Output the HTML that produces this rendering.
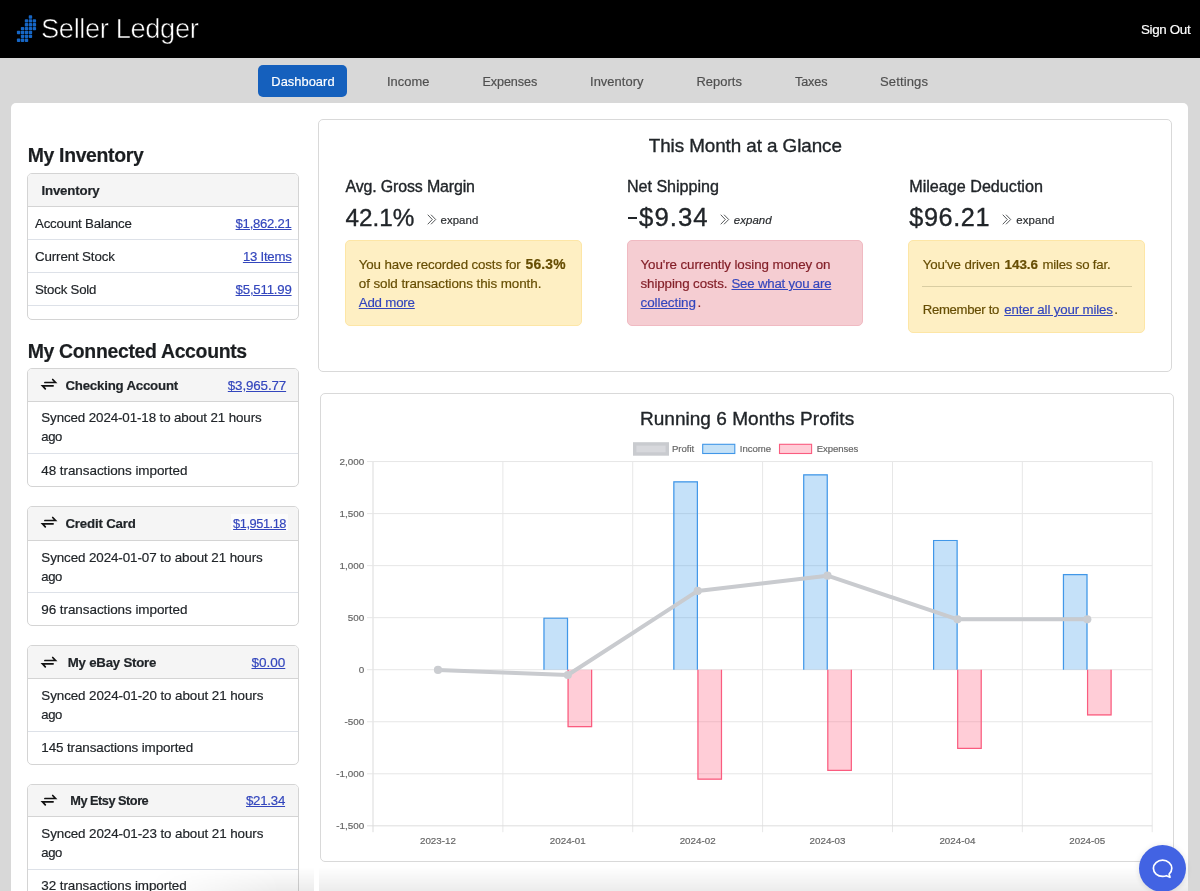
<!DOCTYPE html>
<html><head><meta charset="utf-8"><title>Seller Ledger</title>
<style>
*{box-sizing:border-box;margin:0;padding:0}
html,body{width:1200px;height:891px;overflow:hidden}
body{background:#d8d8d8;font-family:"Liberation Sans",sans-serif;position:relative;color:#212529}
.t{position:absolute;white-space:nowrap;display:block;-webkit-text-stroke:0.18px currentColor}

.card{position:absolute;border:1px solid #d4d4d4;border-radius:5px;background:#fff;overflow:hidden}
.hd{position:absolute;left:0;right:0;top:0;background:#f5f5f5;border-bottom:1px solid #d4d4d4}
.ln{position:absolute;left:0;right:0;height:1px;background:#dde1e8}

#root{position:absolute;left:0;top:0;width:1200px;height:891px;overflow:hidden;will-change:transform}
</style></head><body><div id="root">
<div class="" style="position:absolute;left:0px;top:0px;width:1200.00px;height:58.00px;background:#000"></div>
<svg style="position:absolute;left:0;top:0" width="60" height="58" viewBox="0 0 60 58"><rect x="28.75" y="15.30" width="3.4" height="3.4" rx="0.8" fill="#1666c5"/><rect x="24.80" y="19.18" width="3.4" height="3.4" rx="0.8" fill="#1666c5"/><rect x="28.75" y="19.18" width="3.4" height="3.4" rx="0.8" fill="#1666c5"/><rect x="32.70" y="19.18" width="3.4" height="3.4" rx="0.8" fill="#1666c5"/><rect x="24.80" y="23.06" width="3.4" height="3.4" rx="0.8" fill="#1666c5"/><rect x="28.75" y="23.06" width="3.4" height="3.4" rx="0.8" fill="#1666c5"/><rect x="32.70" y="23.06" width="3.4" height="3.4" rx="0.8" fill="#1666c5"/><rect x="20.85" y="26.94" width="3.4" height="3.4" rx="0.8" fill="#1666c5"/><rect x="24.80" y="26.94" width="3.4" height="3.4" rx="0.8" fill="#1666c5"/><rect x="28.75" y="26.94" width="3.4" height="3.4" rx="0.8" fill="#1666c5"/><rect x="32.70" y="26.94" width="3.4" height="3.4" rx="0.8" fill="#1666c5"/><rect x="16.90" y="30.82" width="3.4" height="3.4" rx="0.8" fill="#1666c5"/><rect x="20.85" y="30.82" width="3.4" height="3.4" rx="0.8" fill="#1666c5"/><rect x="24.80" y="30.82" width="3.4" height="3.4" rx="0.8" fill="#1666c5"/><rect x="28.75" y="30.82" width="3.4" height="3.4" rx="0.8" fill="#1666c5"/><rect x="20.85" y="34.70" width="3.4" height="3.4" rx="0.8" fill="#1666c5"/><rect x="24.80" y="34.70" width="3.4" height="3.4" rx="0.8" fill="#1666c5"/><rect x="28.75" y="34.70" width="3.4" height="3.4" rx="0.8" fill="#1666c5"/><rect x="16.90" y="38.58" width="3.4" height="3.4" rx="0.8" fill="#1666c5"/><rect x="20.85" y="38.58" width="3.4" height="3.4" rx="0.8" fill="#1666c5"/><rect x="24.80" y="38.58" width="3.4" height="3.4" rx="0.8" fill="#1666c5"/></svg>
<span class="t" style="left:41.00px;top:11.01px;font-size:27.3px;line-height:35px;letter-spacing:-0.381px;color:#fff;-webkit-text-stroke:0.6px #000;">Seller Ledger</span>
<span class="t" style="left:1141.00px;top:21.00px;font-size:13.38px;line-height:17px;letter-spacing:-0.340px;color:#fff;">Sign Out</span>
<div class="" style="position:absolute;left:258px;top:65px;width:89.00px;height:32.00px;background:#1560bd;border-radius:5px"></div>
<span class="t" style="left:271.30px;top:73.01px;font-size:12.87px;line-height:17px;letter-spacing:0.042px;color:#fff;">Dashboard</span>
<span class="t" style="left:387.00px;top:73.01px;font-size:12.86px;line-height:17px;letter-spacing:0.044px;color:#4f4f4f;">Income</span>
<span class="t" style="left:482.50px;top:74.01px;font-size:12.64px;line-height:16px;letter-spacing:-0.103px;color:#4f4f4f;">Expenses</span>
<span class="t" style="left:590.00px;top:73.01px;font-size:12.9px;line-height:17px;letter-spacing:0.056px;color:#4f4f4f;">Inventory</span>
<span class="t" style="left:696.50px;top:73.01px;font-size:12.9px;line-height:17px;letter-spacing:0.053px;color:#4f4f4f;">Reports</span>
<span class="t" style="left:795.00px;top:74.00px;font-size:12.62px;line-height:16px;letter-spacing:-0.117px;color:#4f4f4f;">Taxes</span>
<span class="t" style="left:880.00px;top:73.01px;font-size:13.04px;line-height:17px;letter-spacing:0.128px;color:#4f4f4f;">Settings</span>
<div class="" style="position:absolute;left:11px;top:103px;width:1177.00px;height:797.00px;background:#fff;border-radius:5px 5px 0 0"></div>
<span class="t" style="left:27.75px;top:143.01px;font-size:19.4px;line-height:25px;letter-spacing:-0.332px;color:#1b1e21;font-weight:700;">My Inventory</span>
<div class="card" style="position:absolute;left:27px;top:173px;width:272.00px;height:147.00px;"><div class="hd" style="height:33px"></div><div class="ln" style="top:65px"></div><div class="ln" style="top:98px"></div><div class="ln" style="top:131px"></div></div>
<span class="t" style="left:41.50px;top:182.01px;font-size:13.27px;line-height:17px;letter-spacing:-0.183px;color:#212529;font-weight:700;">Inventory</span>
<span class="t" style="left:35.00px;top:215.01px;font-size:13.26px;line-height:17px;letter-spacing:-0.187px;color:#212529;">Account Balance</span>
<span class="t" style="left:35.00px;top:248.01px;font-size:13.34px;line-height:17px;letter-spacing:-0.131px;color:#212529;">Current Stock</span>
<span class="t" style="left:35.00px;top:281.01px;font-size:13.22px;line-height:17px;letter-spacing:-0.199px;color:#212529;">Stock Sold</span>
<span class="t" style="left:235.60px;top:215.00px;font-size:13.11px;line-height:17px;letter-spacing:-0.267px;color:#3346bd;text-decoration:underline;">$1,862.21</span>
<span class="t" style="left:242.90px;top:248.01px;font-size:13.18px;line-height:17px;letter-spacing:-0.235px;color:#3346bd;text-decoration:underline;">13 Items</span>
<span class="t" style="left:235.60px;top:281.01px;font-size:13.22px;line-height:17px;letter-spacing:-0.205px;color:#3346bd;text-decoration:underline;">$5,511.99</span>
<span class="t" style="left:27.70px;top:339.01px;font-size:19.44px;line-height:25px;letter-spacing:-0.329px;color:#1b1e21;font-weight:700;">My Connected Accounts</span>
<div class="card" style="position:absolute;left:27px;top:368px;width:272.00px;height:119.00px;"><div class="hd" style="height:33px"></div><div class="ln" style="top:84px"></div></div>
<svg style="position:absolute;left:36px;top:372.0px" width="28" height="24" viewBox="36 372 28 24"><g fill="none" stroke="#111" stroke-width="1.7" stroke-linecap="round" stroke-linejoin="miter"><path d="M44.9 382.5H55.5L52.7 379.5"/><path d="M53.1 385.8H42.5L45.3 388.8"/></g></svg>
<span class="t" style="left:65.40px;top:377.01px;font-size:13.26px;line-height:17px;letter-spacing:-0.202px;color:#212529;font-weight:700;">Checking Account</span>
<span class="t" style="left:227.80px;top:377.00px;font-size:13.37px;line-height:17px;letter-spacing:-0.125px;color:#3346bd;text-decoration:underline;">$3,965.77</span>
<span class="t" style="left:41.30px;top:409.01px;font-size:13.36px;line-height:17px;letter-spacing:-0.115px;color:#212529;">Synced 2024-01-18 to about 21 hours</span>
<span class="t" style="left:41.30px;top:428.01px;font-size:13.1px;line-height:17px;letter-spacing:-0.422px;color:#212529;">ago</span>
<span class="t" style="left:41.30px;top:462.01px;font-size:13.48px;line-height:18px;letter-spacing:-0.061px;color:#212529;">48 transactions imported</span>
<div class="card" style="position:absolute;left:27px;top:506px;width:272.00px;height:120.00px;"><div class="hd" style="height:34px"></div><div class="ln" style="top:85px"></div></div>
<svg style="position:absolute;left:36px;top:510.29999999999995px" width="28" height="24" viewBox="36 372 28 24"><g fill="none" stroke="#111" stroke-width="1.7" stroke-linecap="round" stroke-linejoin="miter"><path d="M44.9 382.5H55.5L52.7 379.5"/><path d="M53.1 385.8H42.5L45.3 388.8"/></g></svg>
<div class="" style="position:absolute;left:231px;top:514px;width:57.00px;height:17.00px;background:#fbfbfb"></div>
<span class="t" style="left:65.40px;top:515.00px;font-size:13.28px;line-height:17px;letter-spacing:-0.171px;color:#212529;font-weight:700;">Credit Card</span>
<span class="t" style="left:233.10px;top:515.01px;font-size:12.8px;line-height:17px;letter-spacing:-0.445px;color:#3346bd;text-decoration:underline;">$1,951.18</span>
<span class="t" style="left:41.30px;top:549.01px;font-size:13.4px;line-height:17px;letter-spacing:-0.100px;color:#212529;">Synced 2024-01-07 to about 21 hours</span>
<span class="t" style="left:41.30px;top:568.01px;font-size:13.1px;line-height:17px;letter-spacing:-0.422px;color:#212529;">ago</span>
<span class="t" style="left:41.30px;top:601.01px;font-size:13.48px;line-height:18px;letter-spacing:-0.061px;color:#212529;">96 transactions imported</span>
<div class="card" style="position:absolute;left:27px;top:645px;width:272.00px;height:120.00px;"><div class="hd" style="height:33px"></div><div class="ln" style="top:85px"></div></div>
<svg style="position:absolute;left:36px;top:649.4999999999999px" width="28" height="24" viewBox="36 372 28 24"><g fill="none" stroke="#111" stroke-width="1.7" stroke-linecap="round" stroke-linejoin="miter"><path d="M44.9 382.5H55.5L52.7 379.5"/><path d="M53.1 385.8H42.5L45.3 388.8"/></g></svg>
<span class="t" style="left:67.80px;top:654.00px;font-size:13.23px;line-height:17px;letter-spacing:-0.207px;color:#212529;font-weight:700;">My eBay Store</span>
<span class="t" style="left:251.50px;top:654.01px;font-size:13.55px;line-height:18px;letter-spacing:-0.027px;color:#3346bd;text-decoration:underline;">$0.00</span>
<span class="t" style="left:41.30px;top:687.00px;font-size:13.42px;line-height:17px;letter-spacing:-0.089px;color:#212529;">Synced 2024-01-20 to about 21 hours</span>
<span class="t" style="left:41.30px;top:706.01px;font-size:13.1px;line-height:17px;letter-spacing:-0.422px;color:#212529;">ago</span>
<span class="t" style="left:41.30px;top:739.01px;font-size:13.4px;line-height:17px;letter-spacing:-0.092px;color:#212529;">145 transactions imported</span>
<div class="card" style="position:absolute;left:27px;top:784px;width:272.00px;height:121.00px;"><div class="hd" style="height:32px"></div><div class="ln" style="top:84px"></div></div>
<svg style="position:absolute;left:36px;top:787.9999999999999px" width="28" height="24" viewBox="36 372 28 24"><g fill="none" stroke="#111" stroke-width="1.7" stroke-linecap="round" stroke-linejoin="miter"><path d="M44.9 382.5H55.5L52.7 379.5"/><path d="M53.1 385.8H42.5L45.3 388.8"/></g></svg>
<span class="t" style="left:70.30px;top:792.01px;font-size:12.78px;line-height:17px;letter-spacing:-0.501px;color:#212529;font-weight:700;">My Etsy Store</span>
<span class="t" style="left:246.00px;top:792.00px;font-size:13.23px;line-height:17px;letter-spacing:-0.230px;color:#3346bd;text-decoration:underline;">$21.34</span>
<span class="t" style="left:41.30px;top:825.00px;font-size:13.42px;line-height:17px;letter-spacing:-0.089px;color:#212529;">Synced 2024-01-23 to about 21 hours</span>
<span class="t" style="left:41.30px;top:844.01px;font-size:13.1px;line-height:17px;letter-spacing:-0.422px;color:#212529;">ago</span>
<span class="t" style="left:41.30px;top:877.01px;font-size:13.44px;line-height:17px;letter-spacing:-0.077px;color:#212529;">32 transactions imported</span>
<div class="card" style="position:absolute;left:318px;top:119px;width:854.00px;height:253.00px;border-color:#d9d9d9"></div>
<span class="t" style="left:648.75px;top:134.00px;font-size:18.84px;line-height:24px;letter-spacing:-0.074px;color:#212529;-webkit-text-stroke:0.35px currentColor;">This Month at a Glance</span>
<span class="t" style="left:345.50px;top:176.01px;font-size:15.94px;line-height:21px;letter-spacing:-0.138px;color:#212529;-webkit-text-stroke:0.35px currentColor;">Avg. Gross Margin</span>
<span class="t" style="left:345.50px;top:202.00px;font-size:24.28px;line-height:32px;letter-spacing:-0.021px;color:#212529;-webkit-text-stroke:0.35px currentColor;">42.1%</span>
<svg style="position:absolute;left:427px;top:214px" width="11" height="12" viewBox="0 0 11 12"><g fill="none" stroke="#3a3d40" stroke-width="0.85" stroke-linecap="round" stroke-linejoin="round"><path d="M1 1L5.3 5.5L1 10"/><path d="M4.3 1L8.7 5.5L4.3 10"/></g></svg>
<span class="t" style="left:440.50px;top:213.00px;font-size:11.4px;line-height:15px;letter-spacing:0.072px;color:#2b2e31;-webkit-text-stroke:0.2px currentColor;">expand</span>
<span class="t" style="left:627.00px;top:176.00px;font-size:16.13px;line-height:21px;letter-spacing:-0.035px;color:#212529;-webkit-text-stroke:0.35px currentColor;">Net Shipping</span>
<div class="" style="position:absolute;left:628px;top:217px;width:9.00px;height:2.40px;background:#212529"></div>
<span class="t" style="left:639.10px;top:201.02px;font-size:25.76px;line-height:33px;letter-spacing:1.009px;color:#212529;-webkit-text-stroke:0.35px currentColor;">$9.34</span>
<svg style="position:absolute;left:720px;top:214px" width="11" height="12" viewBox="0 0 11 12"><g fill="none" stroke="#3a3d40" stroke-width="0.85" stroke-linecap="round" stroke-linejoin="round"><path d="M1 1L5.3 5.5L1 10"/><path d="M4.3 1L8.7 5.5L4.3 10"/></g></svg>
<span class="t" style="left:733.70px;top:213.00px;font-size:11.44px;line-height:15px;letter-spacing:0.087px;color:#2b2e31;font-style:italic;-webkit-text-stroke:0.2px currentColor;">expand</span>
<span class="t" style="left:909.25px;top:176.01px;font-size:16.17px;line-height:21px;letter-spacing:-0.011px;color:#212529;-webkit-text-stroke:0.35px currentColor;">Mileage Deduction</span>
<span class="t" style="left:909.25px;top:201.02px;font-size:25.27px;line-height:33px;letter-spacing:0.597px;color:#212529;-webkit-text-stroke:0.35px currentColor;">$96.21</span>
<svg style="position:absolute;left:1002.3px;top:214px" width="11" height="12" viewBox="0 0 11 12"><g fill="none" stroke="#3a3d40" stroke-width="0.85" stroke-linecap="round" stroke-linejoin="round"><path d="M1 1L5.3 5.5L1 10"/><path d="M4.3 1L8.7 5.5L4.3 10"/></g></svg>
<span class="t" style="left:1016.25px;top:213.00px;font-size:11.44px;line-height:15px;letter-spacing:0.095px;color:#2b2e31;-webkit-text-stroke:0.2px currentColor;">expand</span>
<div class="" style="position:absolute;left:345px;top:240px;width:237.00px;height:86.00px;background:#feefc3;border:1px solid #fde6a6;border-radius:5px"></div>
<div class="" style="position:absolute;left:627px;top:240px;width:236.00px;height:86.00px;background:#f5cdd2;border:1px solid #f0bac2;border-radius:5px"></div>
<div class="" style="position:absolute;left:908px;top:240px;width:237.00px;height:93.00px;background:#feefc3;border:1px solid #fde6a6;border-radius:5px"></div>
<span class="t" style="left:358.75px;top:256.01px;font-size:13.33px;line-height:17px;letter-spacing:-0.132px;color:#664d03;">You have recorded costs for</span>
<span class="t" style="left:525.50px;top:255.01px;font-size:13.85px;line-height:18px;letter-spacing:0.184px;color:#664d03;font-weight:700;">56.3%</span>
<span class="t" style="left:358.75px;top:275.00px;font-size:13.43px;line-height:17px;letter-spacing:-0.077px;color:#664d03;">of sold transactions this month.</span>
<span class="t" style="left:358.75px;top:294.00px;font-size:13.29px;line-height:17px;letter-spacing:-0.195px;color:#3346bd;text-decoration:underline;">Add more</span>
<span class="t" style="left:640.50px;top:256.00px;font-size:13.38px;line-height:17px;letter-spacing:-0.103px;color:#842029;">You&#x27;re currently losing money on</span>
<span class="t" style="left:640.50px;top:275.00px;font-size:13.38px;line-height:17px;letter-spacing:-0.108px;color:#842029;">shipping costs.</span>
<span class="t" style="left:731.50px;top:275.01px;font-size:13.22px;line-height:17px;letter-spacing:-0.192px;color:#3346bd;text-decoration:underline;">See what you are</span>
<span class="t" style="left:640.50px;top:294.01px;font-size:13.45px;line-height:17px;letter-spacing:-0.065px;color:#3346bd;text-decoration:underline;">collecting</span>
<span class="t" style="left:697.50px;top:294.01px;font-size:13.6px;line-height:18px;letter-spacing:0.000px;color:#842029;">.</span>
<span class="t" style="left:922.70px;top:256.02px;font-size:13.3px;line-height:17px;letter-spacing:-0.145px;color:#664d03;">You&#x27;ve driven</span>
<span class="t" style="left:1004.60px;top:256.00px;font-size:13.47px;line-height:18px;letter-spacing:-0.077px;color:#664d03;font-weight:700;">143.6</span>
<span class="t" style="left:1042.40px;top:256.01px;font-size:13.19px;line-height:17px;letter-spacing:-0.181px;color:#664d03;">miles so far.</span>
<div class="" style="position:absolute;left:922px;top:286px;width:210.00px;height:1.00px;background:#d9cda2"></div>
<span class="t" style="left:922.70px;top:301.01px;font-size:13.14px;line-height:17px;letter-spacing:-0.280px;color:#664d03;">Remember to</span>
<span class="t" style="left:1004.25px;top:301.01px;font-size:13.28px;line-height:17px;letter-spacing:-0.137px;color:#3346bd;text-decoration:underline;">enter all your miles</span>
<span class="t" style="left:1114.30px;top:301.01px;font-size:13.6px;line-height:18px;letter-spacing:0.000px;color:#664d03;">.</span>
<div class="card" style="position:absolute;left:320px;top:393px;width:854.00px;height:469.00px;border-color:#d9d9d9"></div>
<span class="t" style="left:639.90px;top:406.00px;font-size:19.05px;line-height:25px;letter-spacing:0.027px;color:#212529;-webkit-text-stroke:0.35px currentColor;">Running 6 Months Profits</span>
<svg style="position:absolute;left:0;top:0" width="1200" height="891" viewBox="0 0 1200 891"><rect x="372.50" y="461.5" width="1" height="370.7" fill="#dcdcdc"/><rect x="502.37" y="461.5" width="1" height="370.7" fill="#e7e7e7"/><rect x="632.23" y="461.5" width="1" height="370.7" fill="#e7e7e7"/><rect x="762.10" y="461.5" width="1" height="370.7" fill="#e7e7e7"/><rect x="891.97" y="461.5" width="1" height="370.7" fill="#e7e7e7"/><rect x="1021.83" y="461.5" width="1" height="370.7" fill="#e7e7e7"/><rect x="1151.70" y="461.5" width="1" height="370.7" fill="#e7e7e7"/><rect x="367" y="825.32" width="785.2" height="1" fill="#dedede"/><rect x="367" y="773.28" width="785.2" height="1" fill="#e7e7e7"/><rect x="367" y="721.24" width="785.2" height="1" fill="#e7e7e7"/><rect x="367" y="669.20" width="785.2" height="1" fill="#e7e7e7"/><rect x="367" y="617.16" width="785.2" height="1" fill="#e7e7e7"/><rect x="367" y="565.12" width="785.2" height="1" fill="#e7e7e7"/><rect x="367" y="513.08" width="785.2" height="1" fill="#e7e7e7"/><rect x="367" y="461.04" width="785.2" height="1" fill="#e7e7e7"/><rect x="543.40" y="617.66" width="24.70" height="52.04" fill="rgba(54,150,235,0.29)"/><path d="M544.00 669.70V618.26H567.50V669.70" fill="none" stroke="#4197e8" stroke-width="1.2"/><rect x="567.50" y="669.70" width="24.70" height="57.45" fill="rgba(255,99,132,0.32)"/><path d="M568.10 669.70V726.55H591.60V669.70" fill="none" stroke="#fa5c7f" stroke-width="1.2"/><rect x="673.27" y="481.21" width="24.70" height="188.49" fill="rgba(54,150,235,0.29)"/><path d="M673.87 669.70V481.81H697.37V669.70" fill="none" stroke="#4197e8" stroke-width="1.2"/><rect x="697.37" y="669.70" width="24.70" height="110.12" fill="rgba(255,99,132,0.32)"/><path d="M697.97 669.70V779.22H721.47V669.70" fill="none" stroke="#fa5c7f" stroke-width="1.2"/><rect x="803.13" y="474.34" width="24.70" height="195.36" fill="rgba(54,150,235,0.29)"/><path d="M803.73 669.70V474.94H827.23V669.70" fill="none" stroke="#4197e8" stroke-width="1.2"/><rect x="827.23" y="669.70" width="24.70" height="101.27" fill="rgba(255,99,132,0.32)"/><path d="M827.83 669.70V770.37H851.33V669.70" fill="none" stroke="#fa5c7f" stroke-width="1.2"/><rect x="933.00" y="539.91" width="24.70" height="129.79" fill="rgba(54,150,235,0.29)"/><path d="M933.60 669.70V540.51H957.10V669.70" fill="none" stroke="#4197e8" stroke-width="1.2"/><rect x="957.10" y="669.70" width="24.70" height="79.31" fill="rgba(255,99,132,0.32)"/><path d="M957.70 669.70V748.41H981.20V669.70" fill="none" stroke="#fa5c7f" stroke-width="1.2"/><rect x="1062.87" y="573.95" width="24.70" height="95.75" fill="rgba(54,150,235,0.29)"/><path d="M1063.47 669.70V574.55H1086.97V669.70" fill="none" stroke="#4197e8" stroke-width="1.2"/><rect x="1086.97" y="669.70" width="24.70" height="45.80" fill="rgba(255,99,132,0.32)"/><path d="M1087.57 669.70V714.90H1111.07V669.70" fill="none" stroke="#fa5c7f" stroke-width="1.2"/><polyline fill="none" stroke="#c9cbcf" stroke-width="4" stroke-linejoin="round" points="438.0,669.9 567.8,675.0 697.7,590.9 827.5,575.7 957.5,619.3 1087.3,619.3"/><circle cx="438.0" cy="669.9" r="4.1" fill="#cbcdd1"/><circle cx="567.8" cy="675.0" r="4.1" fill="#cbcdd1"/><circle cx="697.7" cy="590.9" r="4.1" fill="#cbcdd1"/><circle cx="827.5" cy="575.7" r="4.1" fill="#cbcdd1"/><circle cx="957.5" cy="619.3" r="4.1" fill="#cbcdd1"/><circle cx="1087.3" cy="619.3" r="4.1" fill="#cbcdd1"/><rect x="634.7" y="443.9" width="32.6" height="10.1" fill="#d7d8dc" stroke="#c9cbcf" stroke-width="3.4"/><rect x="702.7" y="444.3" width="32.1" height="9.2" fill="#c4e1f7" stroke="#4197e8" stroke-width="1.1"/><rect x="779.5" y="444.3" width="32.1" height="9.2" fill="#ffcdd7" stroke="#fa5c7f" stroke-width="1.1"/></svg>
<span class="t" style="left:672.00px;top:443.01px;font-size:9.58px;line-height:12px;letter-spacing:-0.014px;color:#666;">Profit</span>
<span class="t" style="left:739.80px;top:443.01px;font-size:9.59px;line-height:12px;letter-spacing:-0.011px;color:#666;">Income</span>
<span class="t" style="left:816.70px;top:443.01px;font-size:9.54px;line-height:12px;letter-spacing:-0.043px;color:#666;">Expenses</span>
<span class="t" style="left:336.13px;top:819.00px;font-size:9.9px;line-height:13px;letter-spacing:0.000px;color:#666;">-1,500</span>
<span class="t" style="left:336.13px;top:767.01px;font-size:9.9px;line-height:13px;letter-spacing:0.000px;color:#666;">-1,000</span>
<span class="t" style="left:344.38px;top:715.00px;font-size:9.9px;line-height:13px;letter-spacing:-0.000px;color:#666;">-500</span>
<span class="t" style="left:358.71px;top:663.01px;font-size:9.9px;line-height:13px;letter-spacing:0.000px;color:#666;">0</span>
<span class="t" style="left:347.69px;top:611.01px;font-size:9.9px;line-height:13px;letter-spacing:-0.000px;color:#666;">500</span>
<span class="t" style="left:339.43px;top:559.01px;font-size:9.9px;line-height:13px;letter-spacing:-0.000px;color:#666;">1,000</span>
<span class="t" style="left:339.43px;top:507.01px;font-size:9.9px;line-height:13px;letter-spacing:-0.000px;color:#666;">1,500</span>
<span class="t" style="left:339.43px;top:455.00px;font-size:9.9px;line-height:13px;letter-spacing:-0.000px;color:#666;">2,000</span>
<span class="t" style="left:419.95px;top:834.01px;font-size:9.8px;line-height:13px;letter-spacing:0.000px;color:#666;">2023-12</span>
<span class="t" style="left:549.82px;top:834.01px;font-size:9.8px;line-height:13px;letter-spacing:-0.000px;color:#666;">2024-01</span>
<span class="t" style="left:679.68px;top:834.01px;font-size:9.8px;line-height:13px;letter-spacing:-0.000px;color:#666;">2024-02</span>
<span class="t" style="left:809.55px;top:834.01px;font-size:9.8px;line-height:13px;letter-spacing:-0.000px;color:#666;">2024-03</span>
<span class="t" style="left:939.42px;top:834.01px;font-size:9.8px;line-height:13px;letter-spacing:-0.000px;color:#666;">2024-04</span>
<span class="t" style="left:1069.28px;top:834.01px;font-size:9.8px;line-height:13px;letter-spacing:-0.000px;color:#666;">2024-05</span>
<div class="" style="position:absolute;left:150px;top:867px;width:1038.00px;height:24.00px;background:linear-gradient(to bottom,rgba(0,0,0,0),rgba(0,0,0,0.075));-webkit-mask-image:linear-gradient(to right,transparent,#000 130px);mask-image:linear-gradient(to right,transparent,#000 130px)"></div>
<div class="" style="position:absolute;left:314px;top:862px;width:4.70px;height:29.00px;background:#fff"></div>
<div style="position:absolute;left:1138.6px;top:844.7px;width:47.6px;height:47.6px;border-radius:50%;background:#4263e3;box-shadow:0 1px 6px rgba(0,0,0,0.12)"></div>
<svg style="position:absolute;left:1150px;top:856px" width="26" height="26" viewBox="0 0 26 26"><path d="M12.6 4.2c5.1 0 9.2 3.6 9.2 8.1 0 2.3-1 4.3-2.7 5.8l0.9 3.2-3.6-1.6c-1.2 0.5-2.5 0.7-3.8 0.7-5.1 0-9.2-3.6-9.2-8.1s4.1-8.1 9.2-8.1z" fill="none" stroke="#fff" stroke-width="1.7" stroke-linejoin="round"/></svg>
</div></body></html>
